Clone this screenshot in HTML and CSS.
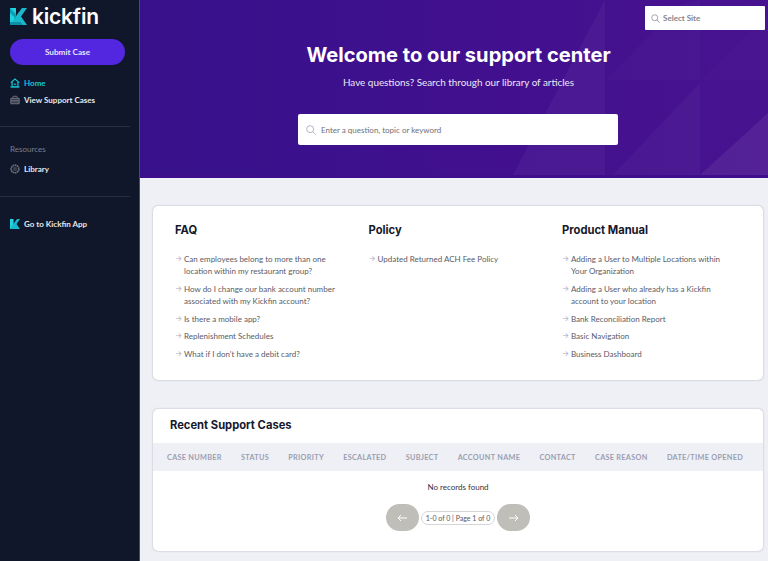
FILE: index.html
```html
<!DOCTYPE html>
<html lang="en">
<head>
    <meta charset="UTF-8">
    <meta name="viewport" content="width=device-width, initial-scale=1.0">
    <title>Kickfin Support</title>
    <link rel="stylesheet" href="styles.css">
</head>
<body>
    <div class="layout">
        <aside class="sidebar">
            <div class="brand">
                <svg class="brand-mark" width="17" height="17" viewBox="0 0 17 17">
                    <path d="M0 0H6V17H0Z" fill="#1fd3e0"/>
                    <path d="M6 8L12 0H17L11 8.5L17 17H0Z" fill="#19b9cc"/>
                    <path d="M0 0L6 6V11L0 5Z" fill="#0e9fb5"/>
                    <path d="M0 14L10.5 14L13 17H0Z" fill="#0e8fa8"/>
                </svg>
                <span class="brand-name">kickfin</span>
            </div>
            <button class="submit-btn">Submit Case</button>
            <nav class="nav-group">
                <a class="nav-item active">
                    <svg width="10" height="10" viewBox="0 0 12 12" fill="none" stroke="#14c6d8" stroke-width="1.4">
                        <path d="M1 5.5L6 1.2L11 5.5"/>
                        <path d="M2.5 4.5V10.5H9.5V4.5"/>
                        <path d="M0.5 10.8H11.5"/>
                        <path d="M4.5 7.5H7.5"/>
                    </svg>
                    Home
                </a>
                <a class="nav-item">
                    <svg width="10" height="10" viewBox="0 0 12 12" fill="none" stroke="#6d7280" stroke-width="1.2">
                        <path d="M1 4H11V10.5H1Z" fill="#3b3f4c"/>
                        <path d="M3 4L4 1.5H8L9 4"/>
                        <path d="M1 7H11"/>
                    </svg>
                    View Support Cases
                </a>
            </nav>
            <div class="side-section">
                <p class="side-label">Resources</p>
                <a class="nav-item">
                    <svg width="10" height="10" viewBox="0 0 12 12" fill="none">
                        <circle cx="6" cy="6" r="4.6" stroke="#6d7280" stroke-width="2" stroke-dasharray="2 .6"/>
                        <circle cx="6" cy="6" r="2.6" fill="#3b3f4c"/>
                    </svg>
                    Library
                </a>
            </div>
            <div class="side-section app-link">
                <a class="nav-item">
                    <svg width="10" height="10" viewBox="0 0 17 17">
                        <path d="M0 0H6V17H0Z" fill="#1fd3e0"/>
                        <path d="M6 8L12 0H17L11 8.5L17 17H0Z" fill="#19b9cc"/>
                    </svg>
                    Go to Kickfin App
                </a>
            </div>
        </aside>

        <main class="main">
            <section class="hero">
                <svg class="hero-shapes" width="628" height="178" viewBox="0 0 628 178">
                    <path d="M373 175L465 0V175Z" fill="#ffffff" opacity=".04"/>
                    <path d="M465 80L540 5L560 0V80Z" fill="#ffffff" opacity=".02"/>
                    <path d="M473 175L560 83V175Z" fill="#ffffff" opacity=".03"/>
                    <path d="M560 80L628 14V80Z" fill="#ffffff" opacity=".012"/>
                    <path d="M560 175L628 113V175Z" fill="#ffffff" opacity=".065"/>
                </svg>
                <div class="site-row">
                    <div class="site-select">
                        <svg width="9" height="9" viewBox="0 0 12 12" fill="none" stroke="#9a9aa6" stroke-width="1.2">
                            <circle cx="5" cy="5" r="4"/>
                            <path d="M8 8L11.5 11.5"/>
                        </svg>
                        Select Site
                    </div>
                </div>
                <h1>Welcome to our support center</h1>
                <p class="hero-sub">Have questions? Search through our library of articles</p>
                <div class="hero-search">
                    <svg width="10" height="10" viewBox="0 0 12 12" fill="none" stroke="#b0aec4" stroke-width="1.1">
                        <circle cx="5" cy="5" r="4.2"/>
                        <path d="M8 8L11.5 11.5"/>
                    </svg>
                    Enter a question, topic or keyword
                </div>
            </section>

            <section class="card articles">
                <div class="col">
                    <h2>FAQ</h2>
                    <ul>
                        <li>Can employees belong to more than one location within my restaurant group?</li>
                        <li>How do I change our bank account number associated with my Kickfin account?</li>
                        <li>Is there a mobile app?</li>
                        <li>Replenishment Schedules</li>
                        <li>What if I don't have a debit card?</li>
                    </ul>
                </div>
                <div class="col">
                    <h2>Policy</h2>
                    <ul>
                        <li>Updated Returned ACH Fee Policy</li>
                    </ul>
                </div>
                <div class="col">
                    <h2>Product Manual</h2>
                    <ul>
                        <li>Adding a User to Multiple Locations within Your Organization</li>
                        <li>Adding a User who already has a Kickfin account to your location</li>
                        <li>Bank Reconciliation Report</li>
                        <li>Basic Navigation</li>
                        <li>Business Dashboard</li>
                    </ul>
                </div>
            </section>

            <section class="card cases">
                <h2>Recent Support Cases</h2>
                <div class="case-head">
                    <span>Case Number</span>
                    <span>Status</span>
                    <span>Priority</span>
                    <span>Escalated</span>
                    <span>Subject</span>
                    <span>Account Name</span>
                    <span>Contact</span>
                    <span>Case Reason</span>
                    <span>Date/Time Opened</span>
                </div>
                <p class="no-records">No records found</p>
                <div class="pager">
                    <button class="page-btn">
                        <svg width="10" height="8" viewBox="0 0 10 8" fill="none" stroke="#fff" stroke-width="1">
                            <path d="M10 4H1M4 1L1 4L4 7"/>
                        </svg>
                    </button>
                    <span class="page-info">1-0 of 0 | Page 1 of 0</span>
                    <button class="page-btn">
                        <svg width="10" height="8" viewBox="0 0 10 8" fill="none" stroke="#fff" stroke-width="1">
                            <path d="M0 4H9M6 1L9 4L6 7"/>
                        </svg>
                    </button>
                </div>
            </section>
        </main>
    </div>
</body>
</html>
```

FILE: styles.css
```css
* { box-sizing: border-box; }
html, body { height: 100%; }
body { margin: 0; overflow: hidden; font-family: Lato, "Liberation Sans", sans-serif; background: #eff0f5; color: #15182b; }
.layout { display: flex; height: 561px; }

.sidebar { width: 140px; flex: none; background: #10172a; border-right: 1px solid #4a4e5c; color: #e6e7ea; font-size: 8px; }
.brand { display: flex; align-items: center; gap: 5px; padding: 0 0 0 10px; height: 33px; margin-bottom: 6px; }
.brand-name { font-family: Inter, sans-serif; font-size: 21px; font-weight: 600; color: #fff; line-height: 20px; letter-spacing: -.2px; }
.submit-btn { display: block; width: 115px; height: 26px; margin-left: 10px; border: 0; border-radius: 13px; background: #5327e0; color: #e8e4fb; font-family: Lato, sans-serif; font-size: 8.2px; font-weight: 700; }
.nav-group { padding: 9px 0 17px 10px; border-bottom: 1px solid #2a2f40; width: 130px; }
.nav-item { display: flex; align-items: center; gap: 4px; height: 17.5px; font-weight: 700; color: #e6e7ea; }
.nav-item.active { color: #14c6d8; }
.side-section { padding: 15px 0 18px 10px; border-bottom: 1px solid #2a2f40; width: 130px; }
.side-label { margin: 0 0 3px; color: #7b7f8c; line-height: 15px; }
.app-link { border-bottom: 0; padding-top: 19px; }

.main { flex: 1; min-width: 0; }
.hero { position: relative; height: 178px; background: linear-gradient(90deg, #37118b, #42108f 60%, #48138f); border-bottom: 3px solid #3e0f8c; color: #fff; text-align: center; overflow: hidden; }
.hero-shapes { position: absolute; left: 0; top: 0; }
.site-row { position: relative; display: flex; justify-content: flex-end; padding: 6px 3px 0 0; }
.site-select { display: flex; align-items: center; gap: 3px; width: 120px; height: 24px; padding-left: 6px; background: #fff; border-radius: 1px; font-size: 8px; font-weight: 700; color: #85858d; text-align: left; }
.hero h1 { position: relative; margin: 12px 0 0; padding-left: 9px; font-family: Inter, sans-serif; font-size: 20.1px; line-height: 26px; font-weight: 700; }
.hero-sub { position: relative; margin: 7px 0 0; padding-left: 9px; font-size: 9.9px; line-height: 14px; color: #ece8f6; }
.hero-search { position: relative; display: flex; align-items: center; gap: 5px; width: 320px; height: 31px; margin: 25px 0 0 158px; padding-left: 8px; background: #fff; border-radius: 2px; font-size: 8px; color: #6f6f78; }

.card { width: 610px; margin-left: 13px; background: #fff; border-radius: 5px; box-shadow: 0 0 2px rgba(40, 40, 70, .35); }
.articles { display: grid; grid-template-columns: 193.5px 193.5px 193.5px; margin-top: 28px; height: 174px; padding: 16px 0 0 22px; }
.col h2 { margin: 0 0 15px; font-family: Inter, sans-serif; font-size: 11.2px; line-height: 16px; font-weight: 700; }
.col ul { list-style: none; margin: 0; padding: 0; }
.col li { position: relative; width: 164px; margin-bottom: 5.8px; padding-left: 9px; font-size: 8px; line-height: 12px; color: #5a5b66; }
.col li::before { content: "\2192"; position: absolute; left: 0; top: 0; font-family: Inter, sans-serif; font-size: 7.5px; color: #a9a6bb; }
.cases { margin-top: 29px; height: 142px; }
.cases h2 { margin: 0; padding: 9px 0 0 17px; height: 34px; font-family: Inter, sans-serif; font-size: 11.2px; line-height: 15px; font-weight: 700; }
.case-head { display: flex; justify-content: space-between; align-items: center; height: 28px; padding: 0 20px 0 14px; background: #eff0f5; font-size: 7.3px; font-weight: 700; letter-spacing: .3px; text-transform: uppercase; color: #9a9eb2; }
.no-records { margin: 10px 0 0; font-size: 8px; line-height: 12px; text-align: center; color: #33343f; }
.pager { display: flex; align-items: center; justify-content: center; gap: 2px; margin-top: 11px; }
.page-btn { display: flex; align-items: center; justify-content: center; width: 33px; height: 27px; border: 0; border-radius: 14px; background: #bfbeb9; padding: 0; }
.page-info { height: 14px; padding: 0 4px; border: 1px solid #d5d5d8; border-radius: 7px; font-size: 7px; line-height: 12px; color: #55565f; }
```
